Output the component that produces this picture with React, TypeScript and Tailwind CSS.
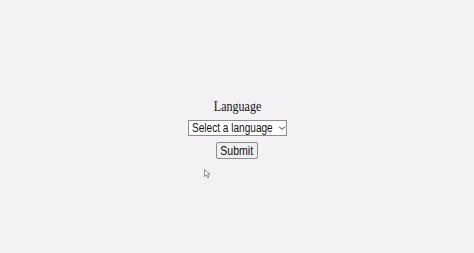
export default function App() {
  return (
    <div className="flex h-[253px] w-[474px] flex-col items-center bg-[#f3f1f4] pt-[99px] [font-family:'Liberation_Sans',sans-serif] text-[#111]">
      <label className="pl-[1px] text-[14px] leading-[16px] text-[#111] [font-family:'Liberation_Serif',serif]">
        <span className="inline-block scale-x-[0.86]">Language</span>
      </label>
      <div className="mt-[5px] flex h-[16px] w-[99px] items-center border border-[#8d8d8d] bg-white pl-[3px]">
        <span className="block w-[82px] whitespace-nowrap text-[12px] leading-[14px]">
          <span className="inline-block origin-left scale-x-[0.84]">Select a language</span>
        </span>
        <svg width="8" height="6" viewBox="0 0 8 6" className="ml-[4px]">
          <path d="M1 1.5 L4 4.5 L7 1.5" fill="none" stroke="#333" strokeWidth="1" />
        </svg>
      </div>
      <button className="mt-[6px] flex h-[17px] w-[42px] items-center justify-center rounded-[2px] border border-[#8d8d8d] bg-[#efefef] text-[12px] leading-[14px]">
        <span className="inline-block scale-x-[0.88] whitespace-nowrap">Submit</span>
      </button>
      <svg width="8" height="10" viewBox="0 0 8 10" className="ml-[-58px] mt-[10px]">
        <path d="M0.5 0.5 L0.5 7.5 L2.3 5.8 L3.6 8.8 L4.8 8.3 L3.6 5.4 L6 5.4 Z" fill="#fff" stroke="#777" strokeWidth="0.8" />
      </svg>
    </div>
  );
}
